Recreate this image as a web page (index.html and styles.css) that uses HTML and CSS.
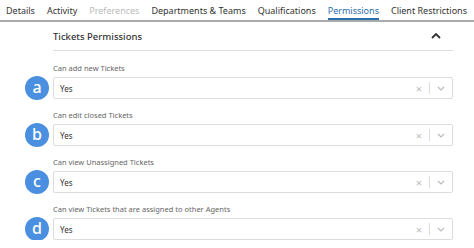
FILE: index.html
```html
<!DOCTYPE html>
<html lang="en">
  <head>
    <title>Agent - Permissions</title>
    <meta charset="UTF-8">
    <link rel="stylesheet" href="styles.css">
  </head>
  <body>
    <nav class="tabs">
      <a class="tab" href="#details">Details</a>
      <a class="tab" href="#activity">Activity</a>
      <a class="tab tab--disabled" href="#preferences">Preferences</a>
      <a class="tab" href="#departments">Departments &amp; Teams</a>
      <a class="tab" href="#qualifications">Qualifications</a>
      <a class="tab tab--active" href="#permissions">Permissions</a>
      <a class="tab" href="#restrictions">Client Restrictions</a>
    </nav>

    <section class="panel">
      <div class="panel__head">
        <h2 class="panel__title">Tickets Permissions</h2>
        <svg class="panel__toggle" width="10" height="6" viewBox="0 0 10 6"><path d="M1 5 L5 1 L9 5" fill="none" stroke="#333" stroke-width="1.8"/></svg>
      </div>

      <div class="field">
        <span class="badge">a</span>
        <label class="field__label">Can add new Tickets</label>
        <div class="select">
          <span class="select__value">Yes</span>
          <span class="select__clear">&times;</span>
          <span class="select__sep"></span>
          <svg class="select__arrow" width="8" height="5" viewBox="0 0 8 5"><path d="M1 1 L4 4 L7 1" fill="none" stroke="#bbb" stroke-width="1.2"/></svg>
        </div>
      </div>

      <div class="field">
        <span class="badge">b</span>
        <label class="field__label">Can edit closed Tickets</label>
        <div class="select">
          <span class="select__value">Yes</span>
          <span class="select__clear">&times;</span>
          <span class="select__sep"></span>
          <svg class="select__arrow" width="8" height="5" viewBox="0 0 8 5"><path d="M1 1 L4 4 L7 1" fill="none" stroke="#bbb" stroke-width="1.2"/></svg>
        </div>
      </div>

      <div class="field">
        <span class="badge">c</span>
        <label class="field__label">Can view Unassigned Tickets</label>
        <div class="select">
          <span class="select__value">Yes</span>
          <span class="select__clear">&times;</span>
          <span class="select__sep"></span>
          <svg class="select__arrow" width="8" height="5" viewBox="0 0 8 5"><path d="M1 1 L4 4 L7 1" fill="none" stroke="#bbb" stroke-width="1.2"/></svg>
        </div>
      </div>

      <div class="field">
        <span class="badge">d</span>
        <label class="field__label">Can view Tickets that are assigned to other Agents</label>
        <div class="select">
          <span class="select__value">Yes</span>
          <span class="select__clear">&times;</span>
          <span class="select__sep"></span>
          <svg class="select__arrow" width="8" height="5" viewBox="0 0 8 5"><path d="M1 1 L4 4 L7 1" fill="none" stroke="#bbb" stroke-width="1.2"/></svg>
        </div>
      </div>
    </section>
  </body>
</html>
```

FILE: styles.css
```css
* {
  box-sizing: border-box;
}
html, body {
  margin: 0;
  padding: 0;
  background: #fff;
  color: #333;
  font-family: 'Noto Sans', 'Open Sans', sans-serif;
}

/* TABS
---------------------------------------------------------------- */
.tabs {
  display: flex;
  gap: 12px;
  padding: 0 6px;
  height: 22px;
  border-bottom: 2px solid #aaa;
}
.tab {
  display: block;
  height: 20px;
  line-height: 21px;
  font-size: 9px;
  color: #333;
  text-decoration: none;
  white-space: nowrap;
}
.tab--disabled { color: #bbb; }
.tab--active {
  color: #2c6fad;
  border-bottom: 2px solid #2c6fad;
}

/* PANEL
---------------------------------------------------------------- */
.panel {
  width: 453px;
  padding-left: 53px;
}
.panel__head {
  display: flex;
  align-items: center;
  justify-content: space-between;
  height: 29px;
  border-bottom: 1px solid #ddd;
  padding-right: 12px;
}
.panel__title {
  margin: 0;
  font-size: 9.5px;
  font-weight: 500;
  color: #333;
}

/* FIELDS
---------------------------------------------------------------- */
.field {
  position: relative;
  margin-top: 11px;
}
.field + .field { margin-top: 10px; }
.field__label {
  display: block;
  height: 12px;
  line-height: 12px;
  margin-bottom: 3px;
  font-size: 7.5px;
  color: #666;
}
.badge {
  position: absolute;
  left: -28px;
  top: 14px;
  width: 24px;
  height: 24px;
  border-radius: 50%;
  background: #4a8fe0;
  color: #fff;
  font-size: 16px;
  font-weight: 500;
  line-height: 22px;
  text-align: center;
}
.select {
  display: flex;
  align-items: center;
  height: 22px;
  border: 1px solid #ddd;
  border-radius: 2px;
  padding: 0 6px;
}
.select__value {
  flex: 1;
  font-size: 8px;
  color: #333;
}
.select__clear {
  font-size: 11px;
  color: #bbb;
  line-height: 1;
}
.select__sep {
  width: 1px;
  height: 12px;
  background: #ddd;
  margin: 0 7px;
}
.select__arrow { margin-right: 1px; }
```
